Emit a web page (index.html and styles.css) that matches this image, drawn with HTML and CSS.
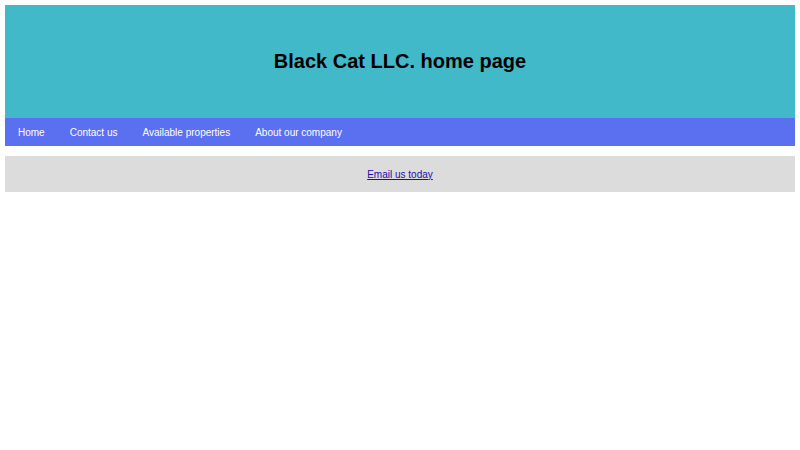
FILE: index.html
```html
<!DOCTYPE html>
<html>
<head>
<meta charset="utf-8">
<title>Black Cat LLC.</title>
<link rel="stylesheet" href="styles.css">
</head>
<body>
<header class="site-header">
  <h1 class="site-title">Black Cat LLC. home page</h1>
</header>
<nav class="site-nav">
  <a class="nav-link" href="#">Home</a>
  <a class="nav-link" href="#">Contact us</a>
  <a class="nav-link" href="#">Available properties</a>
  <a class="nav-link" href="#">About our company</a>
</nav>
<footer class="site-footer">
  <a class="footer-link" href="#">Email us today</a>
</footer>
</body>
</html>
```
FILE: styles.css
```css
html, body {
  background: #ffffff;
}
body {
  margin: 5px;
  font-family: "Liberation Sans", Arial, sans-serif;
  font-size: 10px;
}
.site-header {
  height: 113px;
  background: #42b9c8;
  display: flex;
  align-items: center;
  justify-content: center;
}
.site-title {
  margin: 0;
  font-size: 20px;
  font-weight: bold;
  color: #000000;
}
.site-nav {
  height: 28px;
  background: #5b6ff1;
  display: flex;
  align-items: center;
  padding: 0 0.5px;
}
.nav-link {
  color: #ffffff;
  text-decoration: none;
  padding: 0 12.5px;
  font-size: 10px;
}
.site-footer {
  margin-top: 10px;
  height: 36px;
  background: #dcdcdc;
  display: flex;
  align-items: center;
  justify-content: center;
}
.footer-link {
  color: #1a0dab;
  font-size: 10px;
}
```
